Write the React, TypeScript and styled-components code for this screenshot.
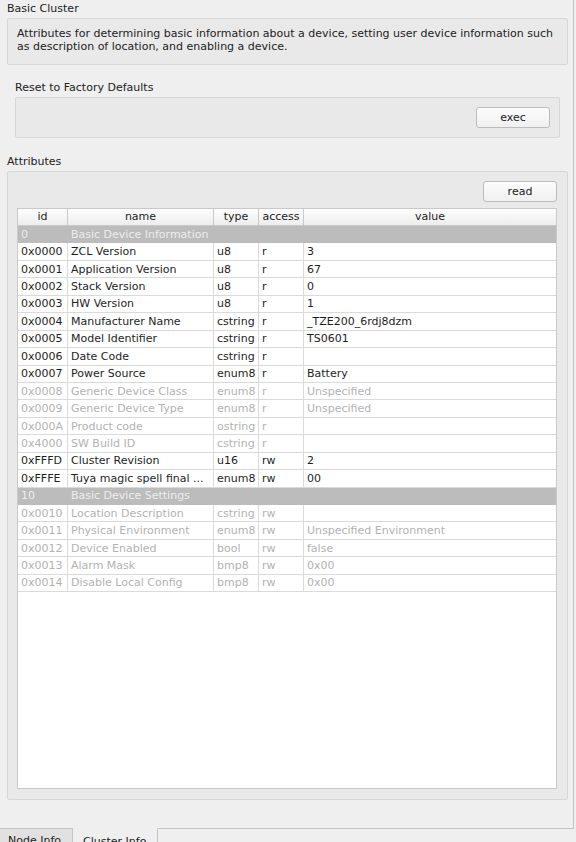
import styled, { createGlobalStyle } from 'styled-components'

const GlobalStyle = createGlobalStyle`
  html, body {
    margin: 0;
    padding: 0;
    background: #efefef;
  }
  body {
    font-family: "DejaVu Sans", "Noto Sans", sans-serif;
    font-size: 11px;
    color: #222;
    overflow: hidden;
  }
`;

const Window = styled.div`
  width: 576px;
  height: 842px;
  display: flex;
  flex-direction: column;
  overflow: hidden;
`;

const Pane = styled.div`
  box-sizing: border-box;
  width: 574px;
  height: 828px;
  flex-shrink: 0;
  border-right: 1px solid #c4c4c4;
  padding: 0 5px 28px 7px;
  display: flex;
  flex-direction: column;
`;

const Label = styled.div<{ $top: number; $indent?: number }>`
  line-height: 13px;
  height: 13px;
  margin: ${(p) => p.$top}px 0 3px ${(p) => p.$indent ?? 0}px;
  white-space: nowrap;
`;

const DescBox = styled.div`
  border: 1px solid #d7d7d7;
  border-radius: 2px;
  background: #e9e9e9;
  padding: 8px 10px 11px 9px;
  line-height: 13px;
  white-space: nowrap;
`;

const ResetBox = styled.div`
  margin: 0 8px;
  border: 1px solid #d7d7d7;
  border-radius: 2px;
  background: #e9e9e9;
  padding: 9px;
  display: flex;
  justify-content: flex-end;
`;

const AttrBox = styled.div`
  flex: 1;
  min-height: 0;
  border: 1px solid #d7d7d7;
  border-radius: 2px;
  background: #e9e9e9;
  padding: 9px 10px 10px 9px;
  display: flex;
  flex-direction: column;
`;

const ButtonRow = styled.div`
  display: flex;
  justify-content: flex-end;
  margin-bottom: 6px;
`;

const Button = styled.button`
  box-sizing: border-box;
  width: 74px;
  height: 21px;
  padding: 0;
  font-family: inherit;
  font-size: 11px;
  color: #222;
  border: 1px solid #bcbcbc;
  border-radius: 3px;
  background: linear-gradient(#fcfcfc, #f0f0f0);
`;

const Table = styled.div`
  flex: 1;
  min-height: 0;
  background: #fff;
  border: 1px solid #c9c9c9;
  overflow: hidden;
`;

const COLS = '50px 146px 45px 45px 1fr';

const HeaderRow = styled.div`
  display: grid;
  grid-template-columns: ${COLS};
  box-sizing: border-box;
  height: 17px;
  border-bottom: 1px solid #c9c9c9;
  background: linear-gradient(#fefefe, #ededed);
`;

const HeaderCell = styled.div`
  border-right: 1px solid #c9c9c9;
  text-align: center;
  line-height: 16px;
  &:last-child {
    border-right: none;
  }
`;

type Kind = 'normal' | 'disabled' | 'group';

const Row = styled.div<{ $kind: Kind }>`
  display: grid;
  grid-template-columns: ${COLS};
  box-sizing: border-box;
  height: 17.45px;
  border-bottom: 1px solid ${(p) => (p.$kind === 'group' ? '#bcbcbc' : '#dadada')};
  background: ${(p) => (p.$kind === 'group' ? '#bcbcbc' : '#fff')};
  color: ${(p) => (p.$kind === 'group' ? '#ededed' : p.$kind === 'disabled' ? '#b2b2b2' : '#1e1e1e')};
`;

const Cell = styled.div<{ $span?: boolean; $plain?: boolean }>`
  display: flex;
  align-items: center;
  padding-left: 3px;
  white-space: nowrap;
  overflow: hidden;
  border-right: 1px solid ${(p) => (p.$plain ? 'transparent' : '#dadada')};
  grid-column: ${(p) => (p.$span ? '2 / -1' : 'auto')};
  &:last-child {
    border-right: none;
  }
`;

const TabBar = styled.div`
  display: flex;
  height: 14px;
  flex-shrink: 0;
`;

const Tab = styled.div<{ $active?: boolean; $width: number }>`
  box-sizing: border-box;
  width: ${(p) => p.$width}px;
  padding: ${(p) => (p.$active ? '6px 0 0 10px' : '5px 0 0 8px')};
  line-height: 13px;
  white-space: nowrap;
  background: ${(p) => (p.$active ? '#efefef' : '#e1e1e1')};
  border-top: 1px solid ${(p) => (p.$active ? 'transparent' : '#c4c4c4')};
  border-right: 1px solid #c4c4c4;
`;

const TabFill = styled.div`
  width: 416px;
  border-top: 1px solid #c4c4c4;
`;

type Attr = { kind: Kind; id: string; name: string; type?: string; access?: string; value?: string };

const attrs: Attr[] = [
  { kind: 'group', id: '0', name: 'Basic Device Information' },
  { kind: 'normal', id: '0x0000', name: 'ZCL Version', type: 'u8', access: 'r', value: '3' },
  { kind: 'normal', id: '0x0001', name: 'Application Version', type: 'u8', access: 'r', value: '67' },
  { kind: 'normal', id: '0x0002', name: 'Stack Version', type: 'u8', access: 'r', value: '0' },
  { kind: 'normal', id: '0x0003', name: 'HW Version', type: 'u8', access: 'r', value: '1' },
  { kind: 'normal', id: '0x0004', name: 'Manufacturer Name', type: 'cstring', access: 'r', value: '_TZE200_6rdj8dzm' },
  { kind: 'normal', id: '0x0005', name: 'Model Identifier', type: 'cstring', access: 'r', value: 'TS0601' },
  { kind: 'normal', id: '0x0006', name: 'Date Code', type: 'cstring', access: 'r', value: '' },
  { kind: 'normal', id: '0x0007', name: 'Power Source', type: 'enum8', access: 'r', value: 'Battery' },
  { kind: 'disabled', id: '0x0008', name: 'Generic Device Class', type: 'enum8', access: 'r', value: 'Unspecified' },
  { kind: 'disabled', id: '0x0009', name: 'Generic Device Type', type: 'enum8', access: 'r', value: 'Unspecified' },
  { kind: 'disabled', id: '0x000A', name: 'Product code', type: 'ostring', access: 'r', value: '' },
  { kind: 'disabled', id: '0x4000', name: 'SW Build ID', type: 'cstring', access: 'r', value: '' },
  { kind: 'normal', id: '0xFFFD', name: 'Cluster Revision', type: 'u16', access: 'rw', value: '2' },
  { kind: 'normal', id: '0xFFFE', name: 'Tuya magic spell final ...', type: 'enum8', access: 'rw', value: '00' },
  { kind: 'group', id: '10', name: 'Basic Device Settings' },
  { kind: 'disabled', id: '0x0010', name: 'Location Description', type: 'cstring', access: 'rw', value: '' },
  { kind: 'disabled', id: '0x0011', name: 'Physical Environment', type: 'enum8', access: 'rw', value: 'Unspecified Environment' },
  { kind: 'disabled', id: '0x0012', name: 'Device Enabled', type: 'bool', access: 'rw', value: 'false' },
  { kind: 'disabled', id: '0x0013', name: 'Alarm Mask', type: 'bmp8', access: 'rw', value: '0x00' },
  { kind: 'disabled', id: '0x0014', name: 'Disable Local Config', type: 'bmp8', access: 'rw', value: '0x00' },
];

function AttrRow({ a }: { a: Attr }) {
  if (a.kind === 'group') {
    return (
      <Row $kind="group">
        <Cell $plain>{a.id}</Cell>
        <Cell $span $plain>{a.name}</Cell>
      </Row>
    );
  }
  return (
    <Row $kind={a.kind}>
      <Cell>{a.id}</Cell>
      <Cell>{a.name}</Cell>
      <Cell>{a.type}</Cell>
      <Cell>{a.access}</Cell>
      <Cell>{a.value}</Cell>
    </Row>
  );
}

export default function App() {
  return (
    <Window>
      <GlobalStyle />
      <Pane>
        <Label $top={2}>Basic Cluster</Label>
        <DescBox>
          Attributes for determining basic information about a device, setting user device information such
          <br />
          as description of location, and enabling a device.
        </DescBox>

        <Label $top={16} $indent={8}>Reset to Factory Defaults</Label>
        <ResetBox>
          <Button>exec</Button>
        </ResetBox>

        <Label $top={17}>Attributes</Label>
        <AttrBox>
          <ButtonRow>
            <Button>read</Button>
          </ButtonRow>
          <Table>
            <HeaderRow>
              <HeaderCell>id</HeaderCell>
              <HeaderCell>name</HeaderCell>
              <HeaderCell>type</HeaderCell>
              <HeaderCell>access</HeaderCell>
              <HeaderCell>value</HeaderCell>
            </HeaderRow>
            {attrs.map((a) => (
              <AttrRow key={a.id + a.name} a={a} />
            ))}
          </Table>
        </AttrBox>
      </Pane>
      <TabBar>
        <Tab $width={73}>Node Info</Tab>
        <Tab $width={85} $active>Cluster Info</Tab>
        <TabFill />
      </TabBar>
    </Window>
  );
}
